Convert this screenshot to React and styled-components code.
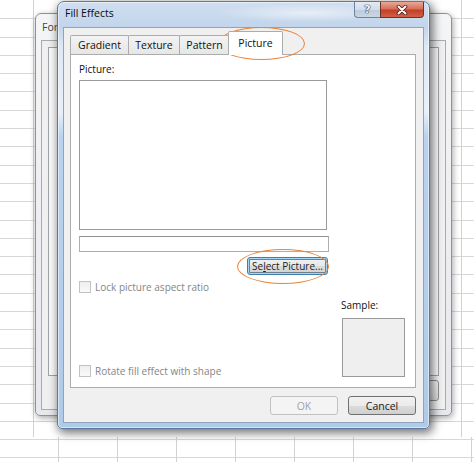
import styled, { createGlobalStyle } from "styled-components";

const GlobalStyle = createGlobalStyle`
  html, body {
    margin: 0;
    padding: 0;
  }
  body {
    font-family: "Open Sans", "Noto Sans", sans-serif;
    font-size: 10px;
    color: #111;
  }
`;

const App = () => {
  return (
    <>
      <GlobalStyle />
      <Sheet>
        <BackWindow>
          <BackCaption>Format Picture</BackCaption>
          <BackClient>
            <BackPanel />
            <BackFooter>
              <BackButton />
            </BackFooter>
          </BackClient>
        </BackWindow>

        <FillWindow>
          <Caption>
            <CaptionTitle>Fill Effects</CaptionTitle>
            <CaptionButtons>
              <HelpButton>?</HelpButton>
              <CloseButton>
                <svg width="12" height="10" viewBox="0 0 12 10">
                  <path
                    d="M2.5 1.5 L9.5 8.5 M9.5 1.5 L2.5 8.5"
                    stroke="#4a1d16"
                    strokeWidth="3.6"
                    strokeLinecap="round"
                  />
                  <path
                    d="M2.5 1.5 L9.5 8.5 M9.5 1.5 L2.5 8.5"
                    stroke="#ffffff"
                    strokeWidth="2"
                    strokeLinecap="round"
                  />
                </svg>
              </CloseButton>
            </CaptionButtons>
          </Caption>

          <Client>
            <TabStrip>
              <Tab $w={59} $first>Gradient</Tab>
              <Tab $w={52}>Texture</Tab>
              <Tab $w={51}>Pattern</Tab>
              <Tab $w={55} $active>
                Picture
              </Tab>
            </TabStrip>

            <Panel>
              <FieldLabel>Picture:</FieldLabel>
              <PictureBox />
              <FileField />
              <ButtonRow>
                <SelectButton>
                  Se<u>l</u>ect Picture...
                </SelectButton>
              </ButtonRow>
              <Lower>
                <Options>
                  <CheckRow>
                    <CheckBox />
                    Lock picture aspect ratio
                  </CheckRow>
                  <CheckRow>
                    <CheckBox />
                    Rotate fill effect with shape
                  </CheckRow>
                </Options>
                <SampleColumn>
                  <SampleLabel>Sample:</SampleLabel>
                  <SampleBox />
                </SampleColumn>
              </Lower>
            </Panel>

            <Footer>
              <DialogButton disabled>OK</DialogButton>
              <DialogButton>Cancel</DialogButton>
            </Footer>
          </Client>
        </FillWindow>

        <Highlight $left={218} $top={27} $w={87} $h={33} />
        <Highlight $left={237} $top={249} $w={92} $h={35} />
      </Sheet>
    </>
  );
};

const Sheet = styled.div`
  position: relative;
  width: 474px;
  height: 462px;
  overflow: hidden;
  background-color: #ffffff;
  background-image: linear-gradient(
      90deg,
      transparent 33px,
      #d2d2d2 33px 34px,
      transparent 34px
    ),
    linear-gradient(90deg, transparent 461px, #d2d2d2 461px 462px, transparent 462px),
    repeating-linear-gradient(90deg, transparent 0 58px, #d2d2d2 58px 59px),
    repeating-linear-gradient(180deg, transparent 0 17.3px, #d8d8d8 17.3px 18.3px);
  background-size: 100% 437px, 100% 437px, 100% 25px, 100% 100%;
  background-position: 0 0, 0 0, 0 437px, 0 1px;
  background-repeat: no-repeat;
`;

/* inactive dialog behind */
const BackWindow = styled.div`
  position: absolute;
  left: 35px;
  top: 13px;
  width: 417px;
  height: 403px;
  box-sizing: border-box;
  border: 1px solid #8d9299;
  border-radius: 6px 6px 5px 5px;
  background: linear-gradient(180deg, #f4f5f7, #e6e8eb);
  box-shadow: 1px 2px 6px rgba(0, 0, 0, 0.35);
  padding: 0 5px 5px;
  display: flex;
  flex-direction: column;
`;

const BackCaption = styled.div`
  height: 26px;
  display: flex;
  align-items: center;
  padding-left: 1px;
  font-size: 10.5px;
  color: #444;
  white-space: nowrap;
  overflow: hidden;
`;

const BackClient = styled.div`
  flex: 1;
  border: 1px solid #a7abb0;
  background: #f0f0f0;
  padding: 6px 6px 8px;
  display: flex;
  flex-direction: column;
`;

const BackPanel = styled.div`
  flex: 1;
  border: 1px solid #9ea3a8;
  background: #fbfbfb;
`;

const BackFooter = styled.div`
  height: 21px;
  margin-top: 4px;
  display: flex;
  justify-content: flex-end;
`;

const BackButton = styled.div`
  width: 70px;
  height: 21px;
  box-sizing: border-box;
  border: 1px solid #8e8e8e;
  border-radius: 3px;
  background: linear-gradient(180deg, #f2f2f2, #dedede);
`;

/* active Fill Effects dialog */
const FillWindow = styled.div`
  position: absolute;
  left: 57px;
  top: 1px;
  width: 373px;
  height: 428px;
  box-sizing: border-box;
  border: 1px solid #59799f;
  border-radius: 7px 7px 5px 5px;
  background: radial-gradient(
      ellipse 90px 9px at 250px 11px,
      rgba(255, 255, 255, 0.55),
      transparent
    ),
    linear-gradient(
      180deg,
      #d0dff0 0px,
      #c2d5eb 25px,
      #dde9f6 45px,
      #e8f0fa 110px,
      #b8d2ef 135px,
      #b0cbea 100%
    );
  box-shadow: 2px 3px 10px 1px rgba(0, 0, 0, 0.55),
    inset 0 0 0 1px rgba(255, 255, 255, 0.5);
  padding: 0 5px 5px;
  display: flex;
  flex-direction: column;
`;

const Caption = styled.div`
  height: 25px;
  display: flex;
  align-items: flex-start;
`;

const CaptionTitle = styled.div`
  margin: 5px 0 0 2px;
  line-height: 13px;
  font-size: 10.5px;
  color: #0c0c0c;
`;

const CaptionButtons = styled.div`
  margin-left: auto;
  display: flex;
`;

const HelpButton = styled.div`
  width: 26px;
  height: 16px;
  box-sizing: border-box;
  border: 1px solid #6f83a0;
  border-top: none;
  border-right: none;
  border-radius: 0 0 0 4px;
  background: linear-gradient(180deg, #e3eaf3 0%, #d2dde9 50%, #bccbdc 51%, #c9d6e4 100%);
  display: flex;
  align-items: center;
  justify-content: center;
  font-family: "DejaVu Sans", sans-serif;
  font-weight: bold;
  font-size: 11px;
  color: #f4f7fb;
  text-shadow: 0 0 1px #1f3553, 0 0 1px #1f3553, 0 0 1px #1f3553;
`;

const CloseButton = styled.div`
  width: 44px;
  height: 16px;
  box-sizing: border-box;
  border: 1px solid #6e3127;
  border-top: none;
  border-radius: 0 0 4px 0;
  background: linear-gradient(180deg, #e9a899 0%, #d7705a 45%, #c23f27 55%, #d1614a 100%);
  display: flex;
  align-items: center;
  justify-content: center;
`;

const Client = styled.div`
  flex: 1;
  border: 1px solid #8fa3bb;
  background: #f0f0f0;
  padding: 3px 7px 7px 6px;
  display: flex;
  flex-direction: column;
`;

const TabStrip = styled.div`
  height: 24px;
  display: flex;
  align-items: flex-end;
  position: relative;
  z-index: 1;
`;

const Tab = styled.div`
  box-sizing: border-box;
  width: ${(p) => p.$w}px;
  height: ${(p) => (p.$active ? 24 : 19)}px;
  margin-bottom: ${(p) => (p.$active ? 0 : 1)}px;
  margin-left: ${(p) => (p.$first ? 0 : p.$active ? -2 : -1)}px;
  border: 1px solid #acacac;
  border-bottom: none;
  border-radius: 2px 2px 0 0;
  background: ${(p) =>
    p.$active ? "#ffffff" : "linear-gradient(180deg, #f3f3f3, #e6e6e6)"};
  display: flex;
  align-items: center;
  justify-content: center;
  padding-bottom: ${(p) => (p.$active ? 2 : 0)}px;
  font-size: 10.5px;
  color: #111;
`;

const Panel = styled.div`
  flex: 1;
  margin-top: -1px;
  border: 1px solid #acacac;
  background: #ffffff;
  padding: 7px 10px 10px 8px;
  display: flex;
  flex-direction: column;
`;

const FieldLabel = styled.div`
  line-height: 14px;
  margin-bottom: 4px;
`;

const PictureBox = styled.div`
  width: 248px;
  height: 150px;
  box-sizing: border-box;
  border: 1px solid #9a9a9a;
  background: #ffffff;
`;

const FileField = styled.div`
  width: 250px;
  height: 16px;
  margin-top: 6px;
  box-sizing: border-box;
  border: 1px solid #abadb3;
  border-top-color: #8e8f92;
  background: #ffffff;
`;

const ButtonRow = styled.div`
  width: 250px;
  margin-top: 5px;
  padding-right: 1px;
  box-sizing: border-box;
  display: flex;
  justify-content: flex-end;
`;

const SelectButton = styled.div`
  width: 81px;
  height: 18px;
  box-sizing: border-box;
  border: 1px solid #3c7fb1;
  border-radius: 3px;
  box-shadow: inset 0 0 0 1px #a6d8f6, inset 0 0 0 2px #6f7f8c;
  background: linear-gradient(180deg, #f2f2f2 0%, #e8e8e8 50%, #dcdcdc 51%, #d2d2d2 100%);
  display: flex;
  align-items: center;
  justify-content: center;
  font-size: 10px;
  color: #1a1a1a;
  white-space: nowrap;

  u {
    text-decoration-thickness: 1px;
    text-underline-offset: 1px;
  }
`;

const Lower = styled.div`
  height: 96px;
  margin-top: 6px;
  display: flex;
`;

const Options = styled.div`
  flex: 1;
  display: flex;
  flex-direction: column;
  justify-content: space-between;
`;

const CheckRow = styled.div`
  height: 12px;
  display: flex;
  align-items: center;
  gap: 4px;
  line-height: 12px;
  color: #858585;
  white-space: nowrap;
`;

const CheckBox = styled.div`
  width: 12px;
  height: 12px;
  box-sizing: border-box;
  border: 1px solid #c2c2c2;
  background: linear-gradient(180deg, #eeeeee, #fafafa);
  flex-shrink: 0;
`;

const SampleColumn = styled.div`
  width: 63px;
  padding-top: 18px;
  display: flex;
  flex-direction: column;
`;

const SampleLabel = styled.div`
  line-height: 12px;
  margin: 0 0 7px -1px;
`;

const SampleBox = styled.div`
  width: 63px;
  height: 59px;
  box-sizing: border-box;
  border: 1px solid #9a9a9a;
  background: #efefef;
`;

const Footer = styled.div`
  height: 19px;
  margin-top: 8px;
  display: flex;
  justify-content: flex-end;
  gap: 10px;
`;

const DialogButton = styled.div`
  width: 68px;
  height: 19px;
  box-sizing: border-box;
  border: 1px solid ${(p) => (p.disabled ? "#c1c1c1" : "#707070")};
  border-radius: 3px;
  background: ${(p) =>
    p.disabled
      ? "#f4f4f4"
      : "linear-gradient(180deg, #f2f2f2 0%, #ebebeb 50%, #dddddd 51%, #cfcfcf 100%)"};
  display: flex;
  align-items: center;
  justify-content: center;
  font-size: 10.5px;
  color: ${(p) => (p.disabled ? "#a3a3a3" : "#1a1a1a")};
`;

const Highlight = styled.div`
  position: absolute;
  left: ${(p) => p.$left}px;
  top: ${(p) => p.$top}px;
  width: ${(p) => p.$w}px;
  height: ${(p) => p.$h}px;
  box-sizing: border-box;
  border: 1.5px solid #e8843c;
  border-radius: 50%;
  pointer-events: none;
`;

export default App;
